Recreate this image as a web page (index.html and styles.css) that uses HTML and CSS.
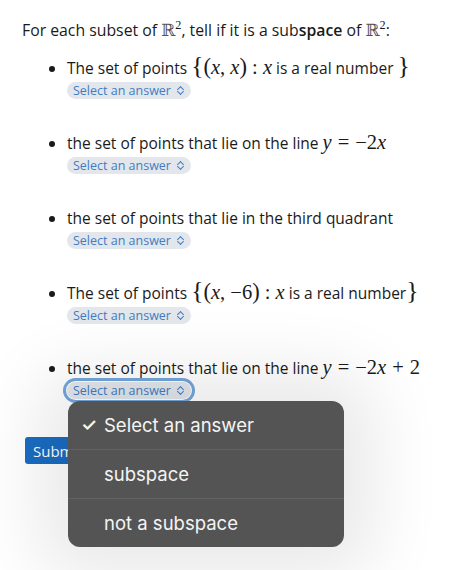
FILE: index.html
```html
<!DOCTYPE html>
<html lang="en">
<head>
  <meta charset="UTF-8">
  <meta name="viewport" content="width=device-width, initial-scale=1.0">
  <title>Subspaces of R2</title>
  <link rel="stylesheet" href="styles.css">
</head>
<body>
  <div class="page">
    <p class="intro">For each subset of <span class="bb">ℝ<sup>2</sup></span>, tell if it is a sub<b>space</b> of <span class="bb">ℝ<sup>2</sup></span>:</p>

    <ul class="questions">
      <li>
        <div class="prompt">The set of points <span class="math"><span class="brace">{</span><span class="paren">(</span><i>x</i>, <i>x</i><span class="paren">)</span> : <i>x</i></span> is a real number <span class="math"><span class="brace">}</span></span></div>
        <button class="pick" type="button">Select an answer <span class="updown"></span></button>
      </li>
      <li>
        <div class="prompt">the set of points that lie on the line <span class="math"><i>y</i><span class="op">=</span>−2<i>x</i></span></div>
        <button class="pick" type="button">Select an answer <span class="updown"></span></button>
      </li>
      <li>
        <div class="prompt">the set of points that lie in the third quadrant</div>
        <button class="pick" type="button">Select an answer <span class="updown"></span></button>
      </li>
      <li>
        <div class="prompt">The set of points <span class="math"><span class="brace">{</span><span class="paren">(</span><i>x</i>, −6<span class="paren">)</span> : <i>x</i></span> is a real number<span class="math"><span class="brace">}</span></span></div>
        <button class="pick" type="button">Select an answer <span class="updown"></span></button>
      </li>
      <li class="open">
        <div class="prompt">the set of points that lie on the line <span class="math"><i>y</i><span class="op">=</span>−2<i>x</i><span class="op">+</span>2</span></div>
        <button class="pick focused" type="button">Select an answer <span class="updown"></span></button>
        <div class="menu">
          <div class="option checked">Select an answer</div>
          <div class="option">subspace</div>
          <div class="option">not a subspace</div>
        </div>
      </li>
    </ul>

    <button class="submit" type="button">Submit</button>
  </div>
</body>
</html>
```

FILE: styles.css
```css
body {
  margin: 0;
  background: #fff;
  font-family: "Open Sans", "DejaVu Sans", sans-serif;
  color: #1a1a1a;
}

.page {
  min-height: 570px;
  box-sizing: border-box;
  padding: 17px 22px 40px;
}

.intro {
  margin: 0;
  font-size: 15.8px;
  line-height: 26px;
}

.intro b {
  font-weight: 600;
}

.bb {
  font-family: "DejaVu Serif", serif;
  font-size: 17px;
  color: #555;
}

.bb sup {
  font-family: "Liberation Serif", serif;
  color: #1a1a1a;
  font-size: 0.72em;
  line-height: 0;
}

.questions {
  list-style: disc;
  margin: 13px 0 0;
  padding-left: 45px;
}

.questions li {
  margin-bottom: 32px;
  position: relative;
}

.prompt {
  font-size: 15.5px;
  line-height: 24px;
}

.math {
  font-family: "Liberation Serif", serif;
  font-size: 20.5px;
  line-height: 0;
}

.math i {
  font-style: italic;
}

.op {
  padding: 0 6px;
}

.brace {
  font-size: 1.25em;
  line-height: 0;
}

.paren {
  font-size: 1.1em;
  line-height: 0;
}

.pick {
  display: flex;
  align-items: center;
  gap: 6px;
  margin-top: 2px;
  padding: 1px 7px 1px 6px;
  height: 17px;
  border: none;
  border-radius: 9px;
  background: #e3e7ec;
  color: #3f7cc4;
  font-family: "Open Sans", "DejaVu Sans", sans-serif;
  font-size: 12.5px;
}

.updown {
  width: 7px;
  height: 9px;
  position: relative;
}

.updown::before,
.updown::after {
  content: "";
  position: absolute;
  left: 1px;
  width: 4px;
  height: 4px;
  border-left: 1.5px solid #3f7cc4;
  border-top: 1.5px solid #3f7cc4;
}

.updown::before {
  top: 1px;
  transform: rotate(45deg);
}

.updown::after {
  top: 3px;
  transform: rotate(225deg);
}

.pick.focused {
  outline: 3px solid #74a6db;
  outline-offset: 1px;
}

.menu {
  position: absolute;
  top: 45px;
  left: 1px;
  width: 276px;
  background: #545454;
  border-radius: 12px;
  box-shadow: 0 0 70px 30px rgba(0, 0, 0, 0.09);
  z-index: 2;
  font-family: "Inter", "Liberation Sans", sans-serif;
}

.option {
  height: 48px;
  line-height: 48px;
  padding-left: 36px;
  color: #f4f4f4;
  font-size: 18.5px;
  border-top: 1px solid #626262;
  position: relative;
}

.option:first-child {
  border-top: none;
}

.option.checked::before {
  content: "✓";
  position: absolute;
  left: 13px;
  font-size: 18px;
  font-weight: 600;
}

.submit {
  margin: 6px 0 0 3px;
  padding: 0 8px;
  height: 27px;
  border: none;
  border-radius: 3px;
  background: #1a6cc2;
  color: #fff;
  font-family: "Open Sans", "DejaVu Sans", sans-serif;
  font-size: 15px;
}
```
